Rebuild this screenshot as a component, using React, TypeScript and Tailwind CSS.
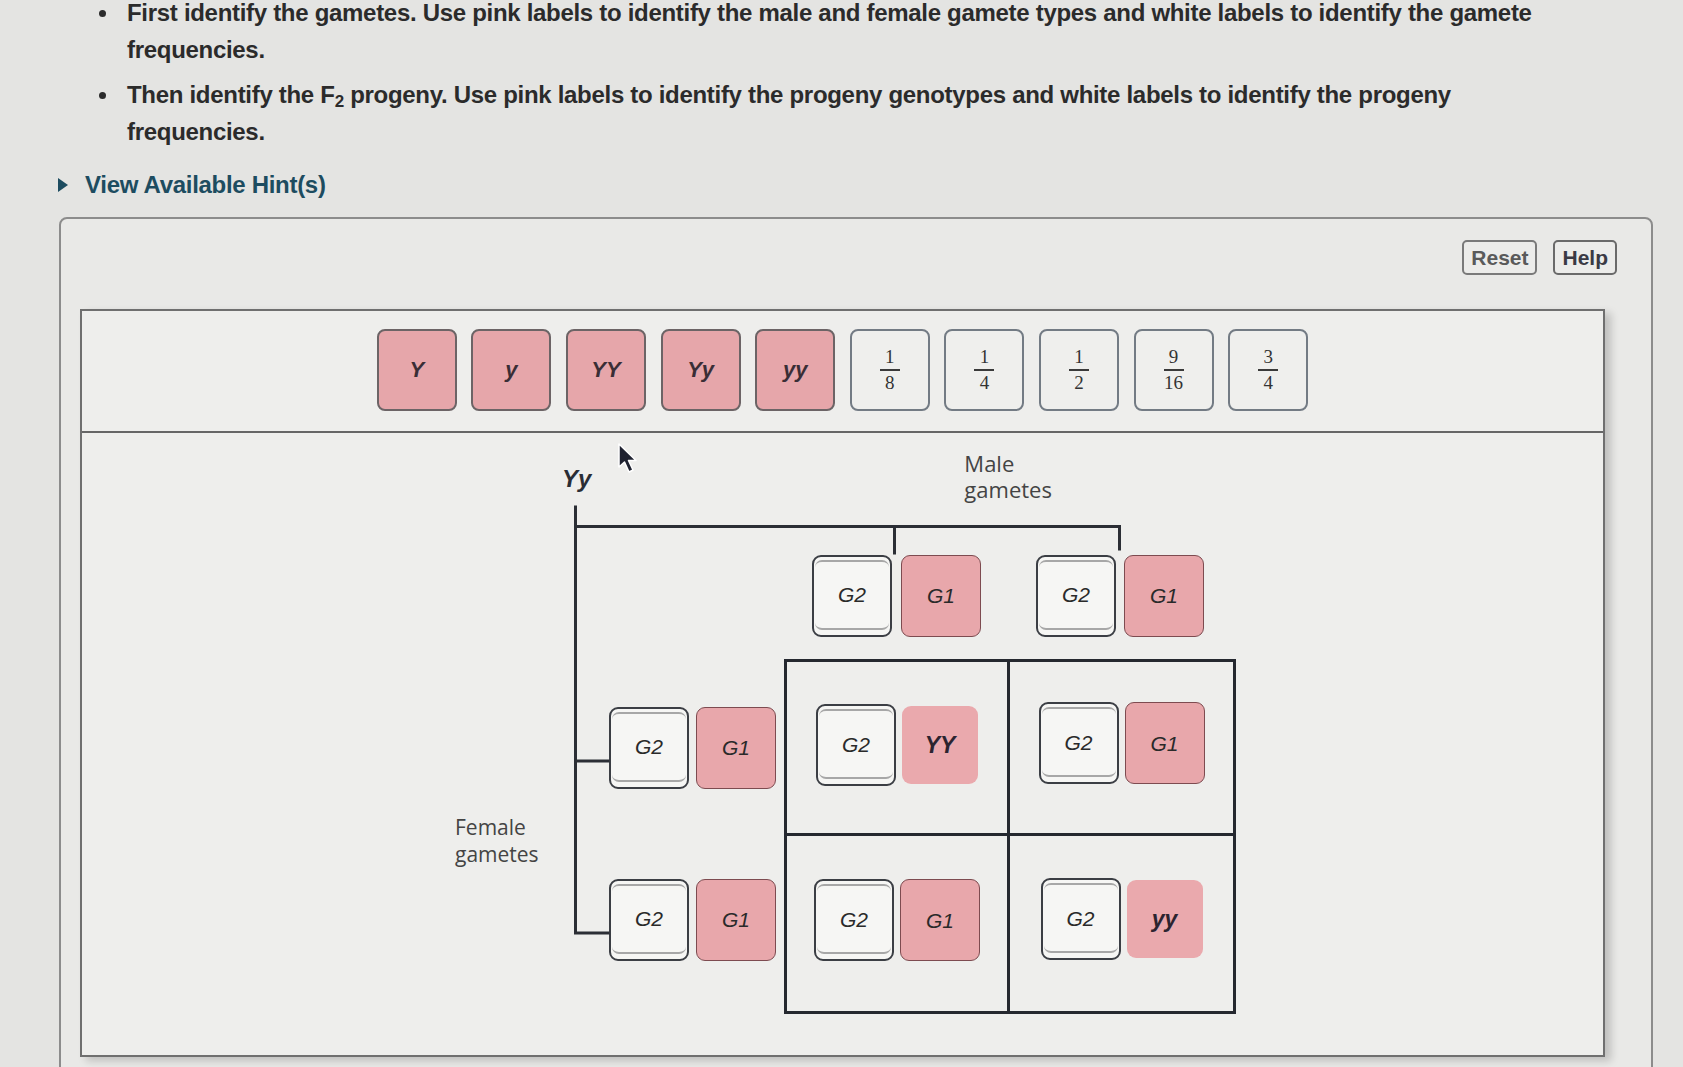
import React from "react";

const sans = { fontFamily: '"Liberation Sans", Arial, sans-serif' };
const humanist = { fontFamily: '"Open Sans", "Noto Sans", sans-serif' };
const serif = { fontFamily: '"Liberation Serif", "Times New Roman", serif' };

function TrayTile({ label }: { label: string }) {
  return (
    <div
      className="flex h-[82px] w-[80px] items-center justify-center rounded-[8px] border-2 border-[#6c6466] bg-[#e6a6aa] text-[22px] font-bold italic text-[#3a2e36]"
      style={sans}
    >
      {label}
    </div>
  );
}

function FracTile({ n, d }: { n: string; d: string }) {
  return (
    <div
      className="flex h-[82px] w-[80px] items-center justify-center rounded-[8px] border-2 border-[#737b84] bg-[#efefed] text-[#333]"
      style={serif}
    >
      <div className="flex flex-col items-center text-[19px] leading-[20px]">
        <span>{n}</span>
        <span className="my-[2px] h-[2px] w-[20px] bg-[#3a3a3a]" />
        <span>{d}</span>
      </div>
    </div>
  );
}

function Target({ label = "G2" }: { label?: string }) {
  return (
    <div className="h-[82px] w-[80px] rounded-[9px] border-2 border-[#3b3e44] bg-[#f6f6f4] px-[1px] pt-[3px] pb-[5px]">
      <div
        className="flex h-full items-center justify-center rounded-[7px] border-y-2 border-[#a7a7a7] text-[21px] italic text-[#2a2a2a]"
        style={sans}
      >
        {label}
      </div>
    </div>
  );
}

function Pink({ label = "G1", filled = false }: { label?: string; filled?: boolean }) {
  return filled ? (
    <div
      className="flex h-[78px] w-[76px] items-center justify-center rounded-[9px] bg-[#eaa9ad] text-[23px] font-bold italic text-[#2c2430]"
      style={sans}
    >
      {label}
    </div>
  ) : (
    <div
      className="flex h-[82px] w-[80px] items-center justify-center rounded-[9px] border-[1.5px] border-[#7d4b50] bg-[#e8a7ab] text-[21px] italic text-[#2a2a2a]"
      style={sans}
    >
      {label}
    </div>
  );
}

function Pair({ right }: { right: React.ReactNode }) {
  return (
    <div className="flex items-center gap-[6px]">
      <Target />
      {right}
    </div>
  );
}

function Connectors() {
  // bracket lines of the cross diagram
  return (
    <svg className="pointer-events-none absolute left-0 top-0" width="820" height="620">
      <g stroke="#2b2e35" strokeWidth="3" fill="none" strokeLinecap="square">
        <path d="M135.5 74 V500 H168" />
        <path d="M135.5 93.5 H679.5 V116" />
        <path d="M454.5 93.5 V120" />
        <path d="M135.5 328 H168" />
      </g>
      <path
        d="M179 11 L179 34 L184.5 29 L189 39 L193 37 L188.5 27.5 L196 27.5 Z"
        fill="#1f2230"
        stroke="#fff"
        strokeWidth="1.5"
        strokeLinejoin="round"
      />
    </svg>
  );
}

export default function App() {
  return (
    <div className="h-[1067px] w-full overflow-hidden bg-[#e4e4e2] text-[#2b2b2b]" style={sans}>
      <ul className="-mt-[5px] pl-[99px] pr-[135px] text-[24px] font-bold leading-[36.5px] tracking-[-0.3px]">
        <li className="flex">
          <span className="mt-[15px] mr-[21px] h-[7px] w-[7px] shrink-0 rounded-full bg-[#2b2b2b]" />
          <span>
            First identify the gametes. Use pink labels to identify the male and female gamete types and white labels to identify the gamete frequencies.
          </span>
        </li>
        <li className="mt-[9px] flex">
          <span className="mt-[15px] mr-[21px] h-[7px] w-[7px] shrink-0 rounded-full bg-[#2b2b2b]" />
          <span>
            Then identify the F<sub className="text-[17px] leading-none">2</sub> progeny. Use pink labels to identify the progeny genotypes and white labels to identify the progeny frequencies.
          </span>
        </li>
      </ul>

      <div className="mt-[17px] flex items-center pl-[57px] text-[24px] font-bold leading-[36.5px] tracking-[-0.3px] text-[#1d4c60]">
        <svg width="12" height="16" viewBox="0 0 12 16" className="mr-[16px]">
          <path d="M1 1 L11 8 L1 15 Z" fill="#1d4c60" />
        </svg>
        View Available Hint(s)
      </div>

      <div className="ml-[59px] mr-[30px] mt-[13px] rounded-[8px] border-2 border-[#8c8c8c] bg-[#e9e9e7] pb-[100px]">
        <div className="flex justify-end gap-[16px] pr-[34px] pt-[21px]">
          <button className="h-[35px] rounded-[5px] border-2 border-[#7a7a7a] bg-[#ececea] px-[7px] text-[21px] font-bold text-[#5a5a5a]">
            Reset
          </button>
          <button className="h-[35px] rounded-[5px] border-2 border-[#6a6a6a] bg-[#ececea] px-[7px] text-[21px] font-bold text-[#3a3a44]">
            Help
          </button>
        </div>

        <div className="ml-[19px] mr-[46px] mt-[34px] border-2 border-[#6f6f6f] bg-[#eeeeec] shadow-[6px_4px_8px_rgba(0,0,0,0.18)]">
          <div className="flex h-[122px] items-center justify-center gap-[14.6px] border-b-2 border-[#666] pb-[2px]">
            <TrayTile label="Y" />
            <TrayTile label="y" />
            <TrayTile label="YY" />
            <TrayTile label="Yy" />
            <TrayTile label="yy" />
            <FracTile n="1" d="8" />
            <FracTile n="1" d="4" />
            <FracTile n="1" d="2" />
            <FracTile n="9" d="16" />
            <FracTile n="3" d="4" />
          </div>

          <div className="relative ml-[358px] h-[622px] w-[820px]">
            <Connectors />
            <div className="flex h-[122px]">
              <div className="ml-[122px] mt-[32px] text-[24px] font-bold italic leading-[28px] text-[#2a2d35]">Yy</div>
              <div className="ml-[373px] mt-[17px] text-[22px] leading-[26px] text-[#444]" style={humanist}>
                Male
                <br />
                gametes
              </div>
            </div>

            <div className="flex">
              <div className="ml-[372px] flex gap-[9px]">
                <Target />
                <Pink />
              </div>
              <div className="ml-[55px] flex gap-[8px]">
                <Target />
                <Pink />
              </div>
            </div>

            <div className="mt-[22px] flex">
              <div className="w-[344px]">
                <div className="ml-[169px] mt-[48px] flex gap-[7px]">
                  <Target />
                  <Pink />
                </div>
                <div className="ml-[15px] mt-[25px] text-[21px] leading-[27px] text-[#444]" style={humanist}>
                  <div>Female</div>
                  <div>gametes</div>
                </div>
                <div className="ml-[169px] mt-[11px] flex gap-[7px]">
                  <Target />
                  <Pink />
                </div>
              </div>

              <div className="grid h-[355px] w-[452px] grid-cols-2 grid-rows-2 border-[3px] border-[#25282f]">
                <div className="flex items-center justify-center border-b-[3px] border-r-[3px] border-[#25282f] pb-[4px]">
                  <Pair right={<Pink label="YY" filled />} />
                </div>
                <div className="flex items-center justify-center border-b-[3px] border-[#25282f] pb-[8px]">
                  <Pair right={<Pink />} />
                </div>
                <div className="flex items-center justify-center border-r-[3px] border-[#25282f] pb-[6px]">
                  <Pair right={<Pink />} />
                </div>
                <div className="flex items-center justify-center pb-[8px]">
                  <Pair right={<Pink label="yy" filled />} />
                </div>
              </div>
            </div>
          </div>
        </div>
      </div>
    </div>
  );
}
